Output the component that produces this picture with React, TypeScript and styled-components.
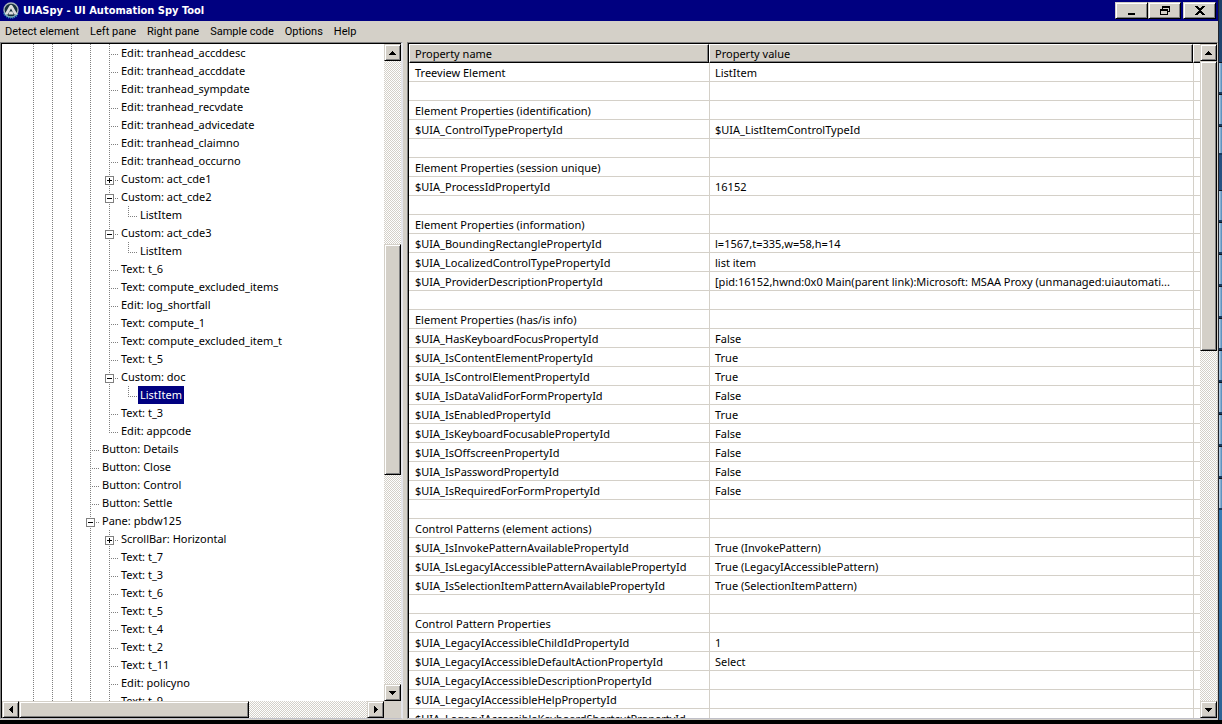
import React from "react";
import styled, { createGlobalStyle, css } from "styled-components";

const face = "#d4d0c8";
const shade = "#808080";
const navy = "#000080";

const GlobalStyle = createGlobalStyle`
  * { box-sizing: border-box; }
  body {
    margin: 0;
    overflow: hidden;
    background: #000;
    color: #000;
    font-family: "Noto Sans", "Open Sans", sans-serif;
    font-size: 11px;
    line-height: 18px;
  }
  button { font: inherit; color: inherit; border: 0; border-radius: 0; padding: 0; margin: 0; background: none; }
`;

const raised = css`
  background: ${face};
  border: 1px solid;
  border-color: ${face} #000 #000 ${face};
  box-shadow: inset 1px 1px 0 #fff, inset -1px -1px 0 ${shade};
`;

const Desktop = styled.div`
  display: grid;
  grid-template-columns: minmax(0, 1fr) 4px;
  height: 100vh;
  padding-bottom: 4px;
`;

const Window = styled.main`
  display: flex;
  flex-direction: column;
  min-height: 0;
  background: ${face};
`;

const TitleBar = styled.header`
  display: flex;
  align-items: center;
  height: 21px;
  padding: 0 2px 0 3px;
  background: ${navy};
  color: #fff;
`;

const Title = styled.h1`
  flex: 1;
  margin: 0 0 0 4px;
  font-family: "DejaVu Sans Condensed", "DejaVu Sans", sans-serif;
  font-size: 11px;
  font-weight: 700;
`;

const CaptionButton = styled.button<{ $apart?: boolean }>`
  ${raised}
  display: flex;
  align-items: center;
  justify-content: center;
  width: 33px;
  height: 17px;
  margin-left: ${(p) => (p.$apart ? 2 : 0)}px;
`;

const MenuBar = styled.nav`
  display: flex;
  gap: 11px;
  height: 21px;
  padding: 0 5px;
  font-family: Roboto, sans-serif;
`;

const MenuItem = styled.button`
  line-height: 20px;
`;

const Panes = styled.div`
  flex: 1;
  display: grid;
  grid-template-columns: 403px minmax(0, 1fr);
  gap: 4px;
  min-height: 0;
  padding-bottom: 1px;
`;

const Pane = styled.section`
  display: grid;
  grid-template-columns: minmax(0, 1fr) 17px;
  grid-template-rows: minmax(0, 1fr) auto;
  min-height: 0;
  border-style: solid;
  border-width: 1px;
  border-color: ${shade} #c0c0c8 #c0c0c8 ${shade};
  background: ${face};
`;

const Sunken = styled(Pane)<{ $flush?: boolean }>`
  border-right-width: ${(p) => (p.$flush ? 1 : 2)}px;
  border-right-color: ${(p) => (p.$flush ? face : "#e4e4ea")};
  box-shadow: inset 1px 1px 0 #000;
  padding: 1px 0 0 1px;
`;

const Tree = styled.ul`
  margin: 0;
  padding: 0 0 0 22px;
  list-style: none;
  overflow: hidden;
  background: #fff;
`;

const TreeRow = styled.li`
  display: flex;
  height: 18px;
`;

const dotsDown = `repeating-linear-gradient(${shade} 0 1px, transparent 1px 2px)`;
const dotsAcross = `repeating-linear-gradient(90deg, ${shade} 0 1px, transparent 1px 2px)`;

const Guide = styled.span<{ $kind: "line" | "branch" | "end" }>`
  flex: none;
  width: 19px;
  height: 18px;
  padding: 6px 0 0 5px;
  background-image: ${dotsDown}, ${dotsAcross};
  background-repeat: no-repeat;
  background-position: 9px 0, 9px 10px;
  background-size: 1px ${(p) => (p.$kind === "end" ? 11 : 18)}px, ${(p) => (p.$kind === "line" ? 0 : 10)}px 1px;
`;

const Expander = styled.button<{ $open: boolean }>`
  display: block;
  width: 9px;
  height: 9px;
  border: 1px solid ${shade};
  background:
    linear-gradient(#000, #000) 1px 3px / 5px 1px no-repeat,
    linear-gradient(#000, #000) 3px 1px / ${(p) => (p.$open ? 0 : 1)}px 5px no-repeat,
    #fff;
`;

const Label = styled.span<{ $selected?: boolean }>`
  padding: 0 2px;
  white-space: nowrap;
  background: ${(p) => (p.$selected ? navy : "transparent")};
  color: ${(p) => (p.$selected ? "#fff" : "#000")};
`;

const Bar = styled.div<{ $across?: boolean }>`
  display: flex;
  flex-direction: ${(p) => (p.$across ? "row" : "column")};
  min-height: 0;
  height: ${(p) => (p.$across ? "17px" : "auto")};
  background: repeating-conic-gradient(#fff 0 25%, ${face} 0 50%) 0 0 / 2px 2px;
`;

const ArrowButton = styled.button`
  ${raised}
  flex: none;
  display: flex;
  align-items: center;
  justify-content: center;
  width: 17px;
  height: 17px;
`;

const Gap = styled.span<{ $part: number }>`
  flex: ${(p) => p.$part} 1 0;
`;

const Thumb = styled.span<{ $part: number }>`
  ${raised}
  flex: ${(p) => p.$part} 1 0;
`;

const arrows = {
  up: "M3 0h1v1h1v1h1v1h1v1H0V3h1V2h1V1h1z",
  down: "M0 0h7v1H6v1H5v1H4v1H3V3H2V2H1V1H0z",
  left: "M3 0h1v7H3V6H2V5H1V4H0V3h1V2h1V1h1z",
  right: "M0 0h1v1h1v1h1v1h1v1H3v1H2v1H1v1H0z",
};

function Arrow({ to }: { to: keyof typeof arrows }) {
  const flat = to === "up" || to === "down";
  return (
    <svg width={flat ? 7 : 4} height={flat ? 4 : 7} shapeRendering="crispEdges" aria-hidden="true">
      <path d={arrows[to]} />
    </svg>
  );
}

function ScrollBar({ parts, across }: { parts: [number, number, number]; across?: boolean }) {
  return (
    <Bar $across={across}>
      <ArrowButton aria-label={across ? "Scroll left" : "Scroll up"}>
        <Arrow to={across ? "left" : "up"} />
      </ArrowButton>
      <Gap $part={parts[0]} />
      <Thumb $part={parts[1]} />
      <Gap $part={parts[2]} />
      <ArrowButton aria-label={across ? "Scroll right" : "Scroll down"}>
        <Arrow to={across ? "right" : "down"} />
      </ArrowButton>
    </Bar>
  );
}

const TableView = styled.div`
  overflow: hidden;
  background: #fff;
`;

const Table = styled.table`
  width: 100%;
  table-layout: fixed;
  border-collapse: separate;
  border-spacing: 0;
`;

const NameCol = styled.col`
  width: 300px;
`;

const SpareCol = styled.col`
  width: 7px;
`;

const Th = styled.th`
  height: 19px;
  padding: 0 5px;
  border: 1px solid;
  border-color: #fff #000 #000 #fff;
  box-shadow: inset -1px -1px 0 ${shade};
  background: ${face};
  font-weight: 400;
  line-height: 17px;
  text-align: left;

  &:last-child {
    padding: 0;
    border-right: 0;
    box-shadow: inset 0 -1px 0 ${shade};
  }
`;

const Td = styled.td`
  height: 19px;
  padding: 2px 0 0 6px;
  border-bottom: 1px solid ${face};
  line-height: 16px;
  white-space: nowrap;
  overflow: hidden;

  & + & {
    padding-left: 5px;
    border-left: 1px solid ${face};
  }
  &:last-child {
    padding: 0;
  }
`;

const Backdrop = styled.aside`
  display: flex;
  flex-direction: column;
  border-left: 1px solid #20242c;
  background: linear-gradient(#1d3f68, #2c5c92 40%, #3a7fb8 70%, #2c6294);
`;

const Tile = styled.span<{ $h: number; $lit?: boolean }>`
  flex: none;
  height: ${(p) => p.$h}px;
  ${(p) =>
    p.$lit &&
    css`
      border-top: 1px solid #0a1420;
      border-bottom: 2px solid #163a5e;
      background: linear-gradient(90deg, #c4d8ea, #4a86b8);
    `}
`;

type Item = [depth: number, text: string, kind?: "plus" | "minus" | "end" | "picked"];

const items: Item[] = [
  [5, "Edit: tranhead_accddesc"],
  [5, "Edit: tranhead_accddate"],
  [5, "Edit: tranhead_sympdate"],
  [5, "Edit: tranhead_recvdate"],
  [5, "Edit: tranhead_advicedate"],
  [5, "Edit: tranhead_claimno"],
  [5, "Edit: tranhead_occurno"],
  [5, "Custom: act_cde1", "plus"],
  [5, "Custom: act_cde2", "minus"],
  [6, "ListItem", "end"],
  [5, "Custom: act_cde3", "minus"],
  [6, "ListItem", "end"],
  [5, "Text: t_6"],
  [5, "Text: compute_excluded_items"],
  [5, "Edit: log_shortfall"],
  [5, "Text: compute_1"],
  [5, "Text: compute_excluded_item_t"],
  [5, "Text: t_5"],
  [5, "Custom: doc", "minus"],
  [6, "ListItem", "picked"],
  [5, "Text: t_3"],
  [5, "Edit: appcode", "end"],
  [4, "Button: Details"],
  [4, "Button: Close"],
  [4, "Button: Control"],
  [4, "Button: Settle"],
  [4, "Pane: pbdw125", "minus"],
  [5, "ScrollBar: Horizontal", "plus"],
  [5, "Text: t_7"],
  [5, "Text: t_3"],
  [5, "Text: t_6"],
  [5, "Text: t_5"],
  [5, "Text: t_4"],
  [5, "Text: t_2"],
  [5, "Text: t_11"],
  [5, "Edit: policyno"],
  [5, "Text: t_9"],
];

const properties: [string, string?][] = [
  ["Treeview Element", "ListItem"],
  [""],
  ["Element Properties (identification)"],
  ["$UIA_ControlTypePropertyId", "$UIA_ListItemControlTypeId"],
  [""],
  ["Element Properties (session unique)"],
  ["$UIA_ProcessIdPropertyId", "16152"],
  [""],
  ["Element Properties (information)"],
  ["$UIA_BoundingRectanglePropertyId", "l=1567,t=335,w=58,h=14"],
  ["$UIA_LocalizedControlTypePropertyId", "list item"],
  [
    "$UIA_ProviderDescriptionPropertyId",
    "[pid:16152,hwnd:0x0 Main(parent link):Microsoft: MSAA Proxy (unmanaged:uiautomati...",
  ],
  [""],
  ["Element Properties (has/is info)"],
  ["$UIA_HasKeyboardFocusPropertyId", "False"],
  ["$UIA_IsContentElementPropertyId", "True"],
  ["$UIA_IsControlElementPropertyId", "True"],
  ["$UIA_IsDataValidForFormPropertyId", "False"],
  ["$UIA_IsEnabledPropertyId", "True"],
  ["$UIA_IsKeyboardFocusablePropertyId", "False"],
  ["$UIA_IsOffscreenPropertyId", "False"],
  ["$UIA_IsPasswordPropertyId", "False"],
  ["$UIA_IsRequiredForFormPropertyId", "False"],
  [""],
  ["Control Patterns (element actions)"],
  ["$UIA_IsInvokePatternAvailablePropertyId", "True (InvokePattern)"],
  ["$UIA_IsLegacyIAccessiblePatternAvailablePropertyId", "True (LegacyIAccessiblePattern)"],
  ["$UIA_IsSelectionItemPatternAvailablePropertyId", "True (SelectionItemPattern)"],
  [""],
  ["Control Pattern Properties"],
  ["$UIA_LegacyIAccessibleChildIdPropertyId", "1"],
  ["$UIA_LegacyIAccessibleDefaultActionPropertyId", "Select"],
  ["$UIA_LegacyIAccessibleDescriptionPropertyId"],
  ["$UIA_LegacyIAccessibleHelpPropertyId"],
  ["$UIA_LegacyIAccessibleKeyboardShortcutPropertyId"],
];

const menus = ["Detect element", "Left pane", "Right pane", "Sample code", "Options", "Help"];

function Logo() {
  return (
    <svg width="16" height="17" viewBox="0 0 16 17" aria-hidden="true">
      <circle cx="8" cy="8" r="7" fill="#16303c" stroke="#a8b4b8" strokeWidth="1.4" />
      <path d="M1 11l2 3 3 1.5h4l3-1.5 2-3" fill="none" stroke="#3aa0b8" strokeWidth="2" strokeDasharray="1 1" />
      <path d="M1.5 12.5L6.4 3.8Q8 1.6 9.6 3.8L14.5 12.5H11.2L8 6.4 4.8 12.5z" fill="#dcdcdc" />
      <path d="M6.5 9.5h3l1 3h-5z" fill="#dcdcdc" />
    </svg>
  );
}

export default function App() {
  return (
    <>
      <GlobalStyle />
      <Desktop>
        <Window>
          <TitleBar>
            <Logo />
            <Title>UIASpy - UI Automation Spy Tool</Title>
            <CaptionButton aria-label="Minimize">
              <svg width="9" height="9" shapeRendering="crispEdges" aria-hidden="true">
                <path d="M1 7h7v2H1z" />
              </svg>
            </CaptionButton>
            <CaptionButton aria-label="Restore">
              <svg width="10" height="9" shapeRendering="crispEdges" aria-hidden="true">
                <path fillRule="evenodd" d="M2 0h8v6H8V5h1V2H3v1H2zM0 3h8v6H0zM1 5v3h6V5z" />
              </svg>
            </CaptionButton>
            <CaptionButton $apart aria-label="Close">
              <svg width="10" height="9" shapeRendering="crispEdges" aria-hidden="true">
                <path d="M0 0h3v1h1v1h2V1h1V0h3v1H9v1H8v1H7v1H6v1h1v1h1v1h1v1h1v1H7V8H6V7H4v1H3v1H0V8h1V7h1V6h1V5h1V4H3V3H2V2H1V1H0z" />
              </svg>
            </CaptionButton>
          </TitleBar>
          <MenuBar>
            {menus.map((name) => (
              <MenuItem key={name}>{name}</MenuItem>
            ))}
          </MenuBar>
          <Panes>
            <Sunken aria-label="Elements">
              <Tree>
                {items.map(([depth, text, kind], i) => (
                  <TreeRow key={i}>
                    {Array.from({ length: depth - 1 }, (_, level) => (
                      <Guide key={level} $kind="line" />
                    ))}
                    <Guide $kind={kind === "end" || kind === "picked" ? "end" : "branch"}>
                      {(kind === "plus" || kind === "minus") && (
                        <Expander
                          $open={kind === "minus"}
                          aria-label={kind === "minus" ? "Collapse" : "Expand"}
                        />
                      )}
                    </Guide>
                    <Label $selected={kind === "picked"}>{text}</Label>
                  </TreeRow>
                ))}
              </Tree>
              <ScrollBar parts={[184, 229, 210]} />
              <ScrollBar across parts={[0, 229, 119]} />
            </Sunken>
            <Sunken $flush aria-label="Properties">
              <TableView>
                <Table>
                  <colgroup>
                    <NameCol />
                    <col />
                    <SpareCol />
                  </colgroup>
                  <thead>
                    <tr>
                      <Th>Property name</Th>
                      <Th>Property value</Th>
                      <Th />
                    </tr>
                  </thead>
                  <tbody>
                    {properties.map(([name, value], i) => (
                      <tr key={i}>
                        <Td>{name}</Td>
                        <Td>{value}</Td>
                        <Td />
                      </tr>
                    ))}
                  </tbody>
                </Table>
              </TableView>
              <ScrollBar parts={[0, 289, 351]} />
            </Sunken>
          </Panes>
        </Window>
        <Backdrop aria-hidden="true">
          <Tile $h={62} />
          <Tile $h={32} $lit />
          <Tile $h={32} $lit />
          <Tile $h={29} $lit />
          <Tile $h={35} />
          {Array.from({ length: 10 }, (_, i) => (
            <Tile key={i} $h={32} $lit />
          ))}
        </Backdrop>
      </Desktop>
    </>
  );
}
